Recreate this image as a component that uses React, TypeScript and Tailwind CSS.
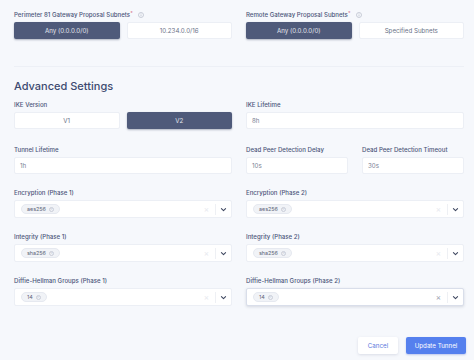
import React from "react";

const Info = () => (
  <svg viewBox="0 0 10 10" className="w-[6px] h-[6px] ml-[5px]">
    <circle cx="5" cy="5" r="4.2" fill="none" stroke="#b8bdca" strokeWidth="1.2" />
    <rect x="4.4" y="4.2" width="1.2" height="3" fill="#b8bdca" />
    <rect x="4.4" y="2.4" width="1.2" height="1.1" fill="#b8bdca" />
  </svg>
);

const Label = ({ text, required, info }: { text: string; required?: boolean; info?: boolean }) => (
  <div className="flex items-center h-[9px] mb-[3px] text-[6.1px] leading-[9px] font-medium text-[#4b5579] whitespace-nowrap">
    {text}
    {required && <span className="text-[#d97a8c] text-[5px] self-start leading-[6px]">*</span>}
    {info && <Info />}
  </div>
);

const Toggle = ({ options, active }: { options: string[]; active: number }) => (
  <div className="grid grid-cols-2 gap-[7px]">
    {options.map((o, i) => (
      <div
        key={o}
        className={
          i === active
            ? "h-[17px] flex items-center justify-center rounded-[2px] bg-[#4f5a7a] text-[#e3e6ee] text-[6.2px] shadow-[0_1px_2px_rgba(40,50,80,0.35)]"
            : "h-[17px] flex items-center justify-center rounded-[2px] bg-white border border-[#eceff5] text-[#6b7288] text-[6.2px]"
        }
      >
        {o}
      </div>
    ))}
  </div>
);

const Input = ({ value }: { value: string }) => (
  <div className="h-[17px] flex items-center px-[5px] rounded-[2px] bg-white border border-[#eceff5] text-[6.2px] text-[#7a8094]">
    {value}
  </div>
);

const Chevron = () => (
  <svg viewBox="0 0 10 10" className="w-[7px] h-[7px]">
    <path d="M2 3.6 L5 6.6 L8 3.6" fill="none" stroke="#3f4760" strokeWidth="1.5" strokeLinecap="round" strokeLinejoin="round" />
  </svg>
);

const Select = ({ value, focused }: { value: string; focused?: boolean }) => (
  <div
    className={
      focused
        ? "h-[18px] flex items-center pl-[6px] rounded-[2px] bg-white border border-[#d9deea] shadow-[0_1px_3px_rgba(60,70,100,0.18)]"
        : "h-[18px] flex items-center pl-[6px] rounded-[2px] bg-white border border-[#eceff5]"
    }
  >
    <div className="flex items-center h-[10px] px-[5px] rounded-full bg-[#f1f3f7] border border-[#e6e9f0] text-[5.4px] text-[#5d6478]">
      {value}
      <span className="ml-[3px] w-[5px] h-[5px] rounded-full border border-[#c9cdd8] flex items-center justify-center text-[4px] leading-none text-[#c0c5d1]">
        ×
      </span>
    </div>
    <div className="flex-1" />
    <span className={focused ? "text-[8px] leading-none text-[#9aa0b0] mr-[6px]" : "text-[8px] leading-none text-[#e6e8ee] mr-[6px]"}>×</span>
    <div className="w-px h-[11px] bg-[#eef0f4]" />
    <div className="w-[15px] flex items-center justify-center">
      <Chevron />
    </div>
  </div>
);

export default function App() {
  return (
    <div
      className="w-[474px] h-[360px] bg-[#f6f8fc] pl-[14px] pr-[10px] pt-[10px] overflow-hidden"
      style={{ fontFamily: "Inter, 'Noto Sans', sans-serif" }}
    >
      {/* Proposal subnets */}
      <div className="grid grid-cols-2 gap-x-[14px]">
        <div>
          <Label text="Perimeter 81 Gateway Proposal Subnets" required info />
          <Toggle options={["Any (0.0.0.0/0)", "10.234.0.0/16"]} active={0} />
        </div>
        <div>
          <Label text="Remote Gateway Proposal Subnets" required info />
          <Toggle options={["Any (0.0.0.0/0)", "Specified Subnets"]} active={0} />
        </div>
      </div>

      <div className="mt-[27px] h-px bg-[#edf0f6]" />

      <h2 className="mt-[12px] h-[14px] leading-[14px] text-[11px] font-medium text-[#3d4a70]">Advanced Settings</h2>

      <div className="mt-[7px] grid grid-cols-2 gap-x-[14px] gap-y-[14px]">
        <div className="mb-[2px]">
          <Label text="IKE Version" />
          <Toggle options={["V1", "V2"]} active={1} />
        </div>
        <div className="mb-[2px]">
          <Label text="IKE Lifetime" />
          <Input value="8h" />
        </div>

        <div>
          <Label text="Tunnel Lifetime" />
          <Input value="1h" />
        </div>
        <div className="grid grid-cols-2 gap-x-[14px]">
          <div>
            <Label text="Dead Peer Detection Delay" />
            <Input value="10s" />
          </div>
          <div>
            <Label text="Dead Peer Detection Timeout" />
            <Input value="30s" />
          </div>
        </div>

        <div>
          <Label text="Encryption (Phase 1)" />
          <Select value="aes256" />
        </div>
        <div>
          <Label text="Encryption (Phase 2)" />
          <Select value="aes256" />
        </div>

        <div>
          <Label text="Integrity (Phase 1)" />
          <Select value="sha256" />
        </div>
        <div>
          <Label text="Integrity (Phase 2)" />
          <Select value="sha256" />
        </div>

        <div>
          <Label text="Diffie-Hellman Groups (Phase 1)" />
          <Select value="14" />
        </div>
        <div>
          <Label text="Diffie-Hellman Groups (Phase 2)" />
          <Select value="14" focused />
        </div>
      </div>

      <div className="mt-[31px] flex justify-end gap-[8px] mr-[-2px]">
        <button className="w-[40px] h-[17px] rounded-[2px] bg-white text-[6.2px] text-[#5b78dd] shadow-[0_1px_3px_rgba(60,70,110,0.15)]">
          Cancel
        </button>
        <button className="w-[60px] h-[17px] rounded-[2px] bg-[#5580ee] text-[6.2px] text-white shadow-[0_1px_2px_rgba(60,90,200,0.3)]">
          Update Tunnel
        </button>
      </div>
    </div>
  );
}
